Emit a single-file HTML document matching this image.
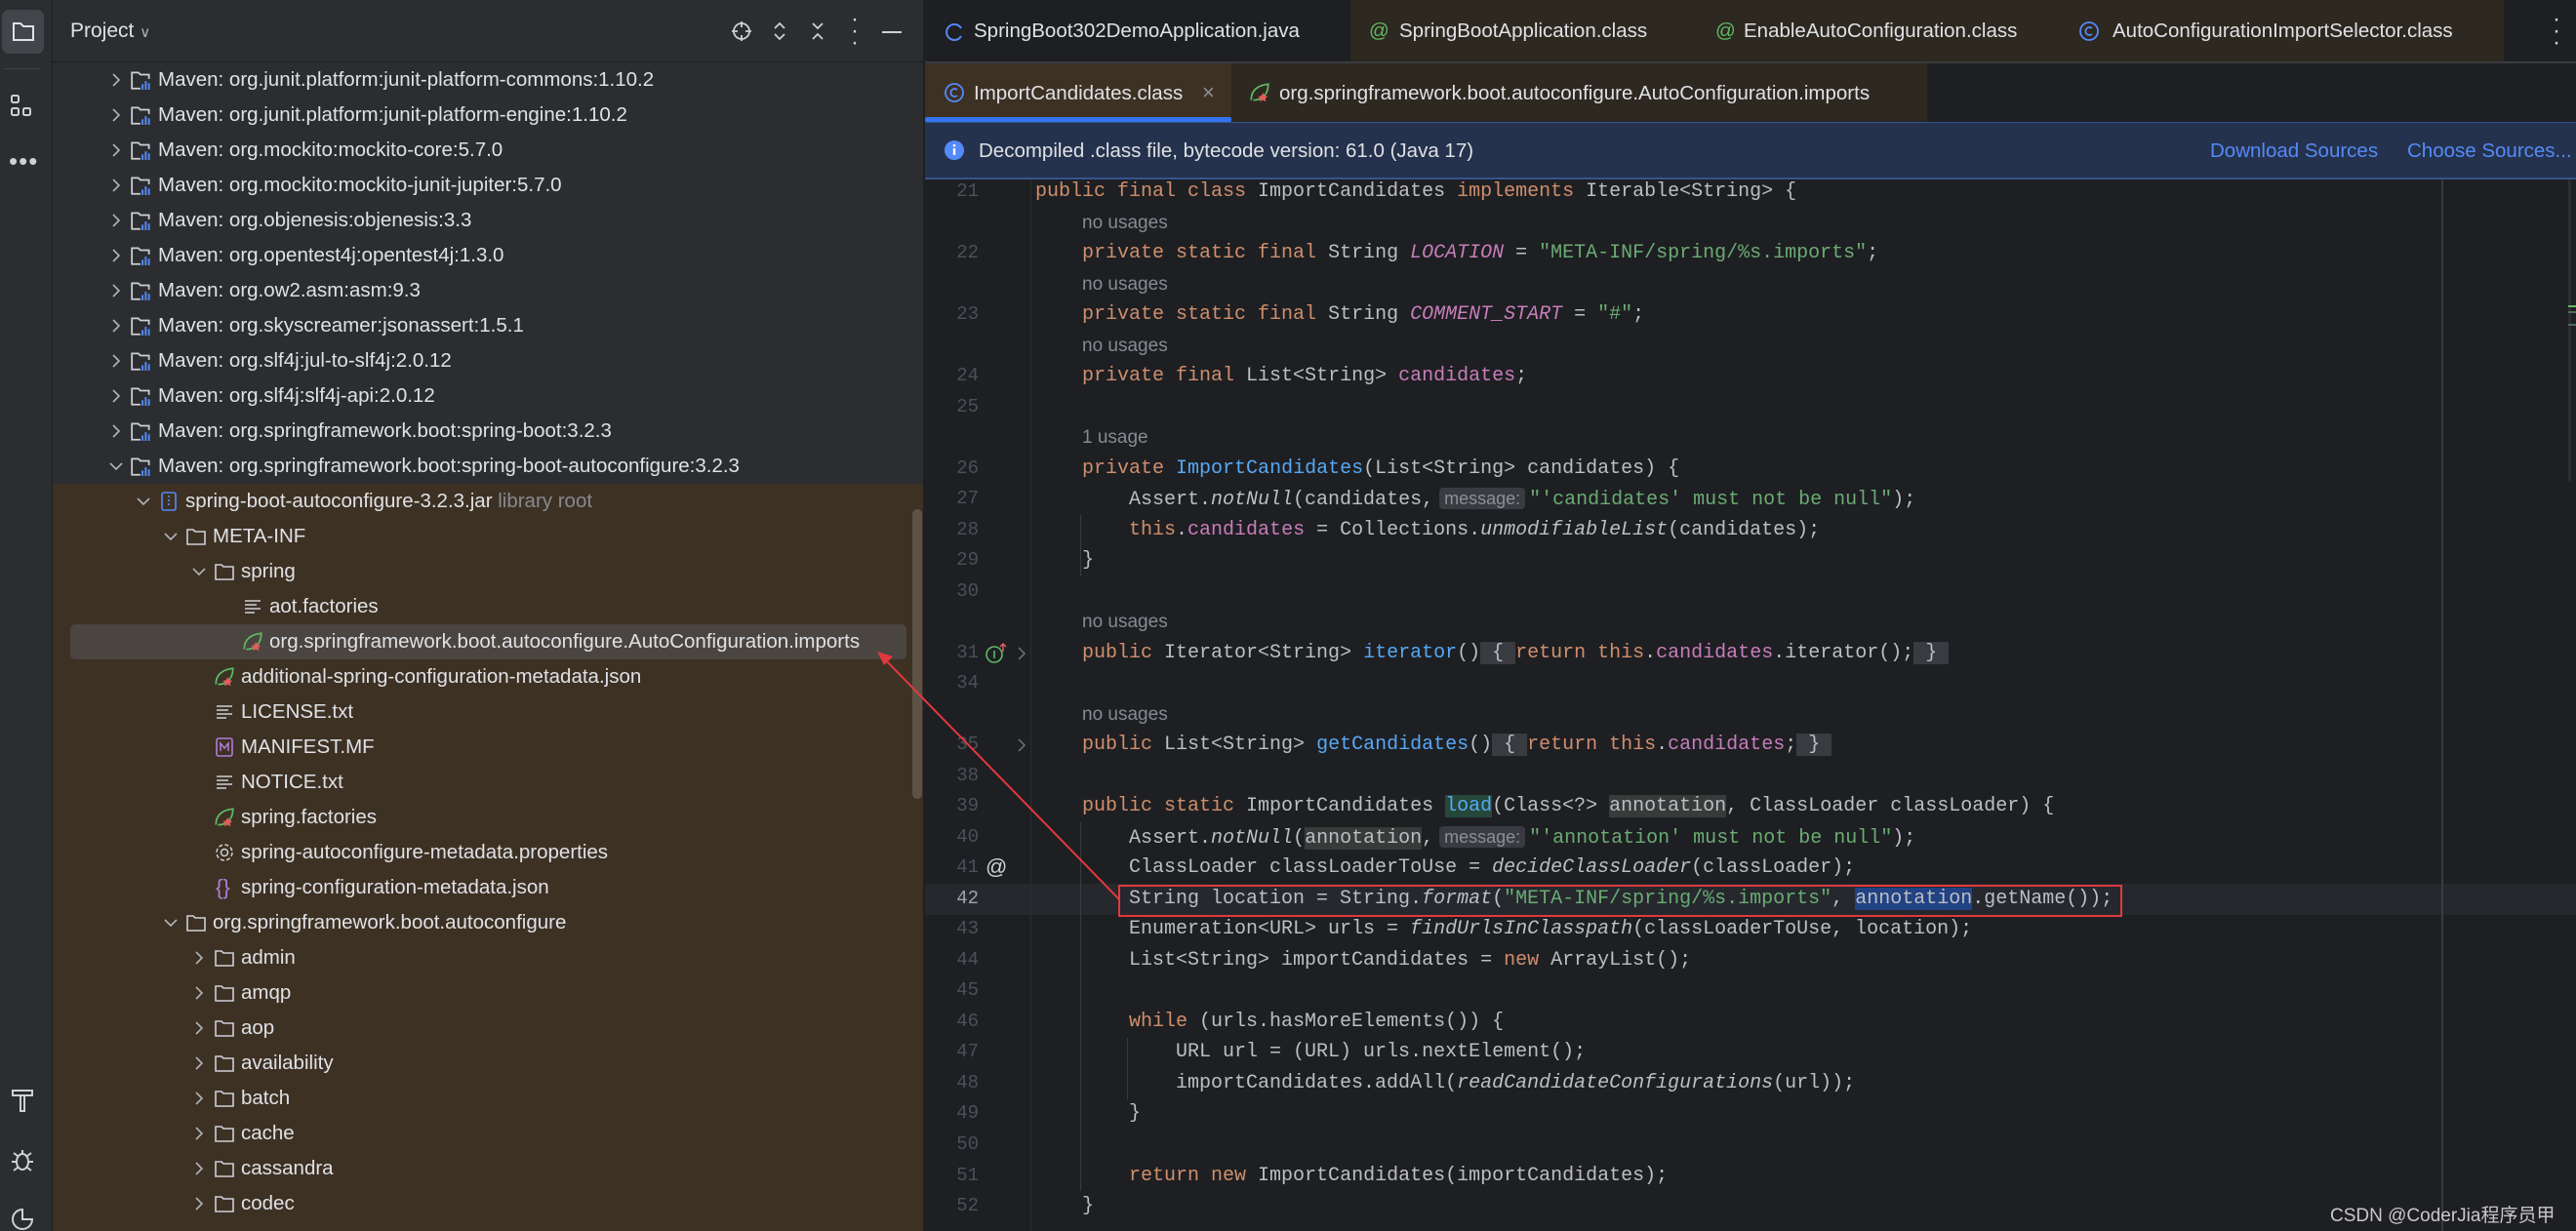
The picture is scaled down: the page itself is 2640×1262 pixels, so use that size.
<!DOCTYPE html>
<html><head><meta charset="utf-8">
<style>
*{margin:0;padding:0;box-sizing:border-box}
html,body{width:2640px;height:1262px}
body{background:#1e1f22;position:relative;overflow:hidden;font-family:"Liberation Sans",sans-serif;color:#dfe1e5}
.a{position:absolute}
.ui{font-size:20.5px;white-space:nowrap}
.tr{position:absolute;height:36px;line-height:36px;font-size:20.5px;white-space:nowrap;color:#dfe1e5}
.tr svg{position:absolute;top:9px}
.cd{position:absolute;left:1061px;top:181px;font-family:"Liberation Mono",monospace;font-size:20px;color:#bcbec4}
.cd div{height:31.53px;line-height:31.53px;white-space:pre}
.ln{position:absolute;left:960px;width:43px;top:181px;font-family:"Liberation Mono",monospace;font-size:19px;color:#4b5059;text-align:right}
.ln div{height:31.53px;line-height:31.53px}
.k{color:#cf8e6d}.s{color:#6aab73}.f{color:#c77dbb}.m{color:#56a8f5}.i{font-style:italic}
.nu{font-family:"Liberation Sans",sans-serif;font-size:19px;color:#868a91}
.hint{font-family:"Liberation Sans",sans-serif;font-size:18px;color:#8c8f94;background:#393b41;border-radius:4px;padding:1px 5px;margin:0 4px 0 6px}
.fb{background:#393b41}
.us{background:#373b39}
</style></head><body>

<div class="a" style="left:0;top:0;width:54px;height:1262px;background:#2b2d30;border-right:1px solid #1e1f22"></div>
<div class="a" style="left:2px;top:10px;width:43px;height:45px;background:#43454a;border-radius:7px"></div>
<svg class="a" style="left:11px;top:19px" width="26" height="26" viewBox="0 0 26 26"><path d="M3 5h7l3 3h10v14H3z" fill="none" stroke="#dfe1e5" stroke-width="2"/></svg>
<div class="a" style="left:5px;top:70px;width:36px;height:1px;background:#43454a"></div>
<svg class="a" style="left:10px;top:96px" width="26" height="26" viewBox="0 0 26 26" fill="none" stroke="#ced0d6" stroke-width="2"><rect x="2" y="2" width="7" height="7" rx="1.5"/><rect x="2" y="15" width="7" height="7" rx="1.5"/><rect x="14" y="15" width="7" height="7" rx="1.5"/></svg>
<div class="a" style="left:9px;top:150px;font-size:26px;color:#ced0d6;letter-spacing:1px">•••</div>
<svg class="a" style="left:9px;top:1114px" width="28" height="28" viewBox="0 0 28 28" fill="none" stroke="#ced0d6" stroke-width="2"><path d="M4 4h20v5H4zM12 9v16h4V9"/></svg>
<svg class="a" style="left:9px;top:1175px" width="28" height="28" viewBox="0 0 28 28" fill="none" stroke="#ced0d6" stroke-width="2"><ellipse cx="14" cy="16" rx="6" ry="8"/><path d="M8 16H3M20 16h5M9 10L5 7M19 10l4-3M9 22l-4 3M19 22l4 3M14 8V4"/></svg>
<svg class="a" style="left:9px;top:1236px" width="28" height="26" viewBox="0 0 28 26" fill="none" stroke="#ced0d6" stroke-width="2"><path d="M14 4a10 10 0 1 0 10 10H14z"/></svg>

<div class="a" style="left:54px;top:0;width:892px;height:1262px;background:#2b2d30"></div>
<div class="a" style="left:54px;top:63px;width:892px;height:1px;background:#1e1f22"></div>
<div class="a ui" style="left:72px;top:20px;font-size:21px;color:#dfe1e5">Project <span style="font-size:15px;color:#b0b3b8">∨</span></div>
<svg class="a" style="left:749px;top:21px" width="22" height="22" viewBox="0 0 22 22" fill="none" stroke="#ced0d6" stroke-width="1.8"><circle cx="11" cy="11" r="8"/><path d="M11 1v6M11 15v6M1 11h6M15 11h6"/></svg>
<svg class="a" style="left:790px;top:21px" width="18" height="22" viewBox="0 0 18 22" fill="none" stroke="#ced0d6" stroke-width="1.8"><path d="M4 8l5-5 5 5M4 14l5 5 5-5"/></svg>
<svg class="a" style="left:829px;top:21px" width="18" height="22" viewBox="0 0 18 22" fill="none" stroke="#ced0d6" stroke-width="1.8"><path d="M4 3l5 5 5-5M4 19l5-5 5 5"/></svg>
<div class="a" style="left:872px;top:14px;font-size:24px;color:#ced0d6;line-height:12px;width:8px">·<br>·<br>·</div>
<div class="a" style="left:904px;top:32px;width:20px;height:2px;background:#ced0d6"></div>

<div class="a" style="left:54px;top:496px;width:892px;height:766px;background:#3d3124"></div>
<div class="a" style="left:72px;top:640px;width:857px;height:36px;background:#4a4540;border-radius:5px"></div>
<div class="a" style="left:935px;top:522px;width:10px;height:297px;background:#5c5246;border-radius:5px"></div>

<svg width="0" height="0" style="position:absolute">
<defs>
<symbol id="chr" viewBox="0 0 18 18"><path d="M6 3l6 6-6 6" fill="none" stroke="#b0b3b8" stroke-width="1.6"/></symbol>
<symbol id="chd" viewBox="0 0 18 18"><path d="M3 6l6 6 6-6" fill="none" stroke="#b0b3b8" stroke-width="1.6"/></symbol>
<symbol id="mvn" viewBox="0 0 22 22"><path d="M2 4h6l2 2h8v13H2z" fill="none" stroke="#ced0d6" stroke-width="1.6"/><rect x="10" y="10" width="9" height="10" fill="#2b2d30"/><path d="M12 20v-5M15 20v-8M18 20v-6" stroke="#548af7" stroke-width="1.8"/></symbol>
<symbol id="fld" viewBox="0 0 22 22"><path d="M2 4h6l2 2h10v13H2z" fill="none" stroke="#ced0d6" stroke-width="1.6"/></symbol>
<symbol id="txt" viewBox="0 0 22 22"><path d="M3 5h16M3 9h12M3 13h16M3 17h10" stroke="#ced0d6" stroke-width="1.6"/></symbol>
<symbol id="spr" viewBox="0 0 22 22"><path d="M3 18C3 8 10 4 19 3c0 9-5 15-14 15" fill="none" stroke="#5fb865" stroke-width="1.6"/><path d="M14 11l1.5 3 3 .5-2.2 2 .6 3-2.9-1.5-2.9 1.5.6-3-2.2-2 3-.5z" fill="#e55b5b"/></symbol>
<symbol id="jar" viewBox="0 0 22 22"><rect x="4" y="2" width="14" height="18" rx="2" fill="none" stroke="#548af7" stroke-width="1.6"/><path d="M11 5v2M11 9v2M11 13v2" stroke="#548af7" stroke-width="1.6"/></symbol>
</defs></svg>

<div class="tr" style="top:64px;left:110px"><svg style="left:0" width="18" height="18"><use href="#chr"/></svg><svg style="left:23px;top:6px" width="24" height="24"><use href="#mvn"/></svg><span style="position:absolute;left:52px">Maven: org.junit.platform:junit-platform-commons:1.10.2</span></div>
<div class="tr" style="top:100px;left:110px"><svg style="left:0" width="18" height="18"><use href="#chr"/></svg><svg style="left:23px;top:6px" width="24" height="24"><use href="#mvn"/></svg><span style="position:absolute;left:52px">Maven: org.junit.platform:junit-platform-engine:1.10.2</span></div>
<div class="tr" style="top:136px;left:110px"><svg style="left:0" width="18" height="18"><use href="#chr"/></svg><svg style="left:23px;top:6px" width="24" height="24"><use href="#mvn"/></svg><span style="position:absolute;left:52px">Maven: org.mockito:mockito-core:5.7.0</span></div>
<div class="tr" style="top:172px;left:110px"><svg style="left:0" width="18" height="18"><use href="#chr"/></svg><svg style="left:23px;top:6px" width="24" height="24"><use href="#mvn"/></svg><span style="position:absolute;left:52px">Maven: org.mockito:mockito-junit-jupiter:5.7.0</span></div>
<div class="tr" style="top:208px;left:110px"><svg style="left:0" width="18" height="18"><use href="#chr"/></svg><svg style="left:23px;top:6px" width="24" height="24"><use href="#mvn"/></svg><span style="position:absolute;left:52px">Maven: org.objenesis:objenesis:3.3</span></div>
<div class="tr" style="top:244px;left:110px"><svg style="left:0" width="18" height="18"><use href="#chr"/></svg><svg style="left:23px;top:6px" width="24" height="24"><use href="#mvn"/></svg><span style="position:absolute;left:52px">Maven: org.opentest4j:opentest4j:1.3.0</span></div>
<div class="tr" style="top:280px;left:110px"><svg style="left:0" width="18" height="18"><use href="#chr"/></svg><svg style="left:23px;top:6px" width="24" height="24"><use href="#mvn"/></svg><span style="position:absolute;left:52px">Maven: org.ow2.asm:asm:9.3</span></div>
<div class="tr" style="top:316px;left:110px"><svg style="left:0" width="18" height="18"><use href="#chr"/></svg><svg style="left:23px;top:6px" width="24" height="24"><use href="#mvn"/></svg><span style="position:absolute;left:52px">Maven: org.skyscreamer:jsonassert:1.5.1</span></div>
<div class="tr" style="top:352px;left:110px"><svg style="left:0" width="18" height="18"><use href="#chr"/></svg><svg style="left:23px;top:6px" width="24" height="24"><use href="#mvn"/></svg><span style="position:absolute;left:52px">Maven: org.slf4j:jul-to-slf4j:2.0.12</span></div>
<div class="tr" style="top:388px;left:110px"><svg style="left:0" width="18" height="18"><use href="#chr"/></svg><svg style="left:23px;top:6px" width="24" height="24"><use href="#mvn"/></svg><span style="position:absolute;left:52px">Maven: org.slf4j:slf4j-api:2.0.12</span></div>
<div class="tr" style="top:424px;left:110px"><svg style="left:0" width="18" height="18"><use href="#chr"/></svg><svg style="left:23px;top:6px" width="24" height="24"><use href="#mvn"/></svg><span style="position:absolute;left:52px">Maven: org.springframework.boot:spring-boot:3.2.3</span></div>
<div class="tr" style="top:460px;left:110px"><svg style="left:0" width="18" height="18"><use href="#chd"/></svg><svg style="left:23px;top:6px" width="24" height="24"><use href="#mvn"/></svg><span style="position:absolute;left:52px">Maven: org.springframework.boot:spring-boot-autoconfigure:3.2.3</span></div>
<div class="tr" style="top:496px;left:138px"><svg style="left:0" width="18" height="18"><use href="#chd"/></svg><svg style="left:24px;top:7px" width="22" height="22"><use href="#jar"/></svg><span style="position:absolute;left:52px">spring-boot-autoconfigure-3.2.3.jar <span style="color:#868a91">library root</span></span></div>
<div class="tr" style="top:532px;left:166px"><svg style="left:0" width="18" height="18"><use href="#chd"/></svg><svg style="left:24px;top:7px" width="22" height="22"><use href="#fld"/></svg><span style="position:absolute;left:52px">META-INF</span></div>
<div class="tr" style="top:568px;left:195px"><svg style="left:0" width="18" height="18"><use href="#chd"/></svg><svg style="left:24px;top:7px" width="22" height="22"><use href="#fld"/></svg><span style="position:absolute;left:52px">spring</span></div>
<div class="tr" style="top:604px;left:224px"><svg style="left:24px;top:7px" width="22" height="22"><use href="#txt"/></svg><span style="position:absolute;left:52px">aot.factories</span></div>
<div class="tr" style="top:640px;left:224px"><svg style="left:23px;top:6px" width="24" height="24"><use href="#spr"/></svg><span style="position:absolute;left:52px">org.springframework.boot.autoconfigure.AutoConfiguration.imports</span></div>
<div class="tr" style="top:676px;left:195px"><svg style="left:23px;top:6px" width="24" height="24"><use href="#spr"/></svg><span style="position:absolute;left:52px">additional-spring-configuration-metadata.json</span></div>
<div class="tr" style="top:712px;left:195px"><svg style="left:24px;top:7px" width="22" height="22"><use href="#txt"/></svg><span style="position:absolute;left:52px">LICENSE.txt</span></div>
<div class="tr" style="top:748px;left:195px"><svg style="left:24px;top:7px" width="22" height="22" viewBox="0 0 22 22"><rect x="3" y="2" width="16" height="18" rx="2" fill="none" stroke="#b17cd8" stroke-width="1.6"/><path d="M7 15V7l4 5 4-5v8" fill="none" stroke="#b17cd8" stroke-width="1.5"/></svg><span style="position:absolute;left:52px">MANIFEST.MF</span></div>
<div class="tr" style="top:784px;left:195px"><svg style="left:24px;top:7px" width="22" height="22"><use href="#txt"/></svg><span style="position:absolute;left:52px">NOTICE.txt</span></div>
<div class="tr" style="top:820px;left:195px"><svg style="left:23px;top:6px" width="24" height="24"><use href="#spr"/></svg><span style="position:absolute;left:52px">spring.factories</span></div>
<div class="tr" style="top:856px;left:195px"><svg style="left:24px;top:7px" width="22" height="22" viewBox="0 0 22 22"><circle cx="11" cy="11" r="3.5" fill="none" stroke="#ced0d6" stroke-width="1.5"/><circle cx="11" cy="11" r="8" fill="none" stroke="#ced0d6" stroke-width="1.5" stroke-dasharray="4 2.3"/></svg><span style="position:absolute;left:52px">spring-autoconfigure-metadata.properties</span></div>
<div class="tr" style="top:892px;left:195px"><span style="position:absolute;left:26px;color:#b17cd8;font-size:22px">{}</span><span style="position:absolute;left:52px">spring-configuration-metadata.json</span></div>
<div class="tr" style="top:928px;left:166px"><svg style="left:0" width="18" height="18"><use href="#chd"/></svg><svg style="left:24px;top:7px" width="22" height="22"><use href="#fld"/></svg><span style="position:absolute;left:52px">org.springframework.boot.autoconfigure</span></div>
<div class="tr" style="top:964px;left:195px"><svg style="left:0" width="18" height="18"><use href="#chr"/></svg><svg style="left:24px;top:7px" width="22" height="22"><use href="#fld"/></svg><span style="position:absolute;left:52px">admin</span></div>
<div class="tr" style="top:1000px;left:195px"><svg style="left:0" width="18" height="18"><use href="#chr"/></svg><svg style="left:24px;top:7px" width="22" height="22"><use href="#fld"/></svg><span style="position:absolute;left:52px">amqp</span></div>
<div class="tr" style="top:1036px;left:195px"><svg style="left:0" width="18" height="18"><use href="#chr"/></svg><svg style="left:24px;top:7px" width="22" height="22"><use href="#fld"/></svg><span style="position:absolute;left:52px">aop</span></div>
<div class="tr" style="top:1072px;left:195px"><svg style="left:0" width="18" height="18"><use href="#chr"/></svg><svg style="left:24px;top:7px" width="22" height="22"><use href="#fld"/></svg><span style="position:absolute;left:52px">availability</span></div>
<div class="tr" style="top:1108px;left:195px"><svg style="left:0" width="18" height="18"><use href="#chr"/></svg><svg style="left:24px;top:7px" width="22" height="22"><use href="#fld"/></svg><span style="position:absolute;left:52px">batch</span></div>
<div class="tr" style="top:1144px;left:195px"><svg style="left:0" width="18" height="18"><use href="#chr"/></svg><svg style="left:24px;top:7px" width="22" height="22"><use href="#fld"/></svg><span style="position:absolute;left:52px">cache</span></div>
<div class="tr" style="top:1180px;left:195px"><svg style="left:0" width="18" height="18"><use href="#chr"/></svg><svg style="left:24px;top:7px" width="22" height="22"><use href="#fld"/></svg><span style="position:absolute;left:52px">cassandra</span></div>
<div class="tr" style="top:1216px;left:195px"><svg style="left:0" width="18" height="18"><use href="#chr"/></svg><svg style="left:24px;top:7px" width="22" height="22"><use href="#fld"/></svg><span style="position:absolute;left:52px">codec</span></div>

<div class="a" style="left:948px;top:0;width:1692px;height:63px;background:#1e1f22"></div>
<div class="a" style="left:1384px;top:0;width:1182px;height:63px;background:#2d2820"></div>
<div class="a" style="left:948px;top:63px;width:1692px;height:2px;background:#393b40"></div>
<svg class="a" style="left:967px;top:21px" width="24" height="24" viewBox="0 0 24 24" fill="none" stroke="#548af7" stroke-width="2"><path d="M18 8a8 8 0 1 0 0 8"/></svg>
<div class="a ui" style="left:998px;top:20px">SpringBoot302DemoApplication.java</div>
<div class="a ui" style="left:1403px;top:20px;color:#5fb865">@</div><div class="a ui" style="left:1434px;top:20px">SpringBootApplication.class</div>
<div class="a ui" style="left:1758px;top:20px;color:#5fb865">@</div><div class="a ui" style="left:1787px;top:20px">EnableAutoConfiguration.class</div>
<svg class="a" style="left:2130px;top:21px" width="22" height="22" viewBox="0 0 22 22" fill="none" stroke="#548af7" stroke-width="1.8"><circle cx="11" cy="11" r="9"/><path d="M14 8a4 4 0 1 0 0 6"/></svg>
<div class="a ui" style="left:2165px;top:20px">AutoConfigurationImportSelector.class</div>
<div class="a" style="left:2616px;top:14px;font-size:24px;color:#ced0d6;line-height:12px">·<br>·<br>·</div>

<div class="a" style="left:948px;top:65px;width:314px;height:60px;background:#3d3124"></div>
<div class="a" style="left:1262px;top:65px;width:713px;height:60px;background:#2d2820"></div>
<div class="a" style="left:948px;top:120px;width:314px;height:5px;background:#3574f0;border-radius:2px"></div>
<svg class="a" style="left:967px;top:84px" width="22" height="22" viewBox="0 0 22 22" fill="none" stroke="#548af7" stroke-width="1.8"><circle cx="11" cy="11" r="9"/><path d="M14 8a4 4 0 1 0 0 6"/></svg>
<div class="a ui" style="left:998px;top:84px">ImportCandidates.class</div>
<div class="a ui" style="left:1232px;top:82px;color:#8c8f94;font-size:22px">×</div>
<svg class="a" style="left:1279px;top:83px" width="24" height="24"><use href="#spr"/></svg>
<div class="a ui" style="left:1311px;top:84px">org.springframework.boot.autoconfigure.AutoConfiguration.imports</div>

<div class="a" style="left:948px;top:125px;width:1692px;height:59px;background:#25324d;border-top:1px solid #35538f;border-bottom:2px solid #35538f"></div>
<svg class="a" style="left:967px;top:143px" width="22" height="22" viewBox="0 0 22 22"><circle cx="11" cy="11" r="10" fill="#548af7"/><rect x="9.8" y="9" width="2.4" height="7" fill="#fff"/><rect x="9.8" y="5" width="2.4" height="2.4" fill="#fff"/></svg>
<div class="a ui" style="left:1003px;top:143px">Decompiled .class file, bytecode version: 61.0 (Java 17)</div>
<div class="a ui" style="left:2265px;top:143px;color:#548af7">Download Sources</div>
<div class="a ui" style="left:2467px;top:143px;color:#548af7">Choose Sources...</div>

<div class="a" style="left:948px;top:906px;width:1692px;height:32px;background:#26282e"></div>
<div class="a" style="left:1056px;top:184px;width:1px;height:1078px;background:#2b2d30"></div>
<div class="a" style="left:2502px;top:184px;width:2px;height:1078px;background:#393b40"></div>
<div class="a" style="left:1107px;top:528px;width:1px;height:63px;background:#393b40"></div>
<div class="a" style="left:1107px;top:843px;width:1px;height:378px;background:#393b40"></div>
<div class="a" style="left:1155px;top:1064px;width:1px;height:63px;background:#393b40"></div>
<div class="a" style="left:2632px;top:184px;width:3px;height:310px;background:#2b2d30"></div>
<div class="a" style="left:2632px;top:313px;width:8px;height:2px;background:#5fb865"></div>
<div class="a" style="left:2632px;top:319px;width:8px;height:2px;background:#4e6b5a"></div>
<div class="a" style="left:2632px;top:332px;width:8px;height:2px;background:#4e6b5a"></div>

<div class="ln"><div>21</div><div></div><div>22</div><div></div><div>23</div><div></div><div>24</div><div>25</div><div></div><div>26</div><div>27</div><div>28</div><div>29</div><div>30</div><div></div><div>31</div><div>34</div><div></div><div>35</div><div>38</div><div>39</div><div>40</div><div>41</div><div style="color:#a1a3ab">42</div><div>43</div><div>44</div><div>45</div><div>46</div><div>47</div><div>48</div><div>49</div><div>50</div><div>51</div><div>52</div></div>
<svg class="a" style="left:1009px;top:658px" width="26" height="24" viewBox="0 0 26 24"><circle cx="10" cy="13" r="8" fill="none" stroke="#5fb865" stroke-width="1.6"/><path d="M10 9v8" stroke="#5fb865" stroke-width="1.6"/><path d="M19 10V2M16 5l3-3 3 3" fill="none" stroke="#e55b5b" stroke-width="1.5"/></svg>
<svg class="a" style="left:1040px;top:661px" width="14" height="18"><path d="M4 3l6 6-6 6" fill="none" stroke="#6f737a" stroke-width="1.5"/></svg>
<svg class="a" style="left:1040px;top:755px" width="14" height="18"><path d="M4 3l6 6-6 6" fill="none" stroke="#6f737a" stroke-width="1.5"/></svg>
<div class="a" style="left:1010px;top:876px;font-size:22px;color:#ced0d6">@</div>

<div class="cd"><div><span class="k">public final class</span> ImportCandidates <span class="k">implements</span> Iterable&lt;String&gt; {</div><div>    <span class="nu">no usages</span></div><div>    <span class="k">private static final</span> String <span class="f i">LOCATION</span> = <span class="s">"META-INF/spring/%s.imports"</span>;</div><div>    <span class="nu">no usages</span></div><div>    <span class="k">private static final</span> String <span class="f i">COMMENT_START</span> = <span class="s">"#"</span>;</div><div>    <span class="nu">no usages</span></div><div>    <span class="k">private final</span> List&lt;String&gt; <span class="f">candidates</span>;</div><div> </div><div>    <span class="nu">1 usage</span></div><div>    <span class="k">private</span> <span class="m">ImportCandidates</span>(List&lt;String&gt; candidates) {</div><div>        Assert.<span class="i">notNull</span>(candidates,<span class="hint">message:</span><span class="s">"'candidates' must not be null"</span>);</div><div>        <span class="k">this</span>.<span class="f">candidates</span> = Collections.<span class="i">unmodifiableList</span>(candidates);</div><div>    }</div><div> </div><div>    <span class="nu">no usages</span></div><div>    <span class="k">public</span> Iterator&lt;String&gt; <span class="m">iterator</span>()<span class="fb"> { </span><span class="k">return this</span>.<span class="f">candidates</span>.iterator();<span class="fb"> } </span></div><div> </div><div>    <span class="nu">no usages</span></div><div>    <span class="k">public</span> List&lt;String&gt; <span class="m">getCandidates</span>()<span class="fb"> { </span><span class="k">return this</span>.<span class="f">candidates</span>;<span class="fb"> } </span></div><div> </div><div>    <span class="k">public static</span> ImportCandidates <span class="m" style="background:#25483a">load</span>(Class&lt;?&gt; <span class="us">annotation</span>, ClassLoader classLoader) {</div><div>        Assert.<span class="i">notNull</span>(<span class="us">annotation</span>,<span class="hint">message:</span><span class="s">"'annotation' must not be null"</span>);</div><div>        ClassLoader classLoaderToUse = <span class="i">decideClassLoader</span>(classLoader);</div><div>        String location = String.<span class="i">format</span>(<span class="s">"META-INF/spring/%s.imports"</span>, <span style="background:#214283">annotation</span>.getName());</div><div>        Enumeration&lt;URL&gt; urls = <span class="i">findUrlsInClasspath</span>(classLoaderToUse, location);</div><div>        List&lt;String&gt; importCandidates = <span class="k">new</span> ArrayList();</div><div> </div><div>        <span class="k">while</span> (urls.hasMoreElements()) {</div><div>            URL url = (URL) urls.nextElement();</div><div>            importCandidates.addAll(<span class="i">readCandidateConfigurations</span>(url));</div><div>        }</div><div> </div><div>        <span class="k">return new</span> ImportCandidates(importCandidates);</div><div>    }</div></div>

<div class="a" style="left:1146px;top:907px;width:1029px;height:33px;border:2px solid #e0393e"></div>
<svg class="a" style="left:0;top:0" width="2640" height="1262" viewBox="0 0 2640 1262"><line x1="903" y1="672" x2="1147" y2="922" stroke="#e0393e" stroke-width="2"/><path d="M899 668l16 5-9 9z" fill="#e0393e"/></svg>

<div class="a" style="left:2388px;top:1231px;white-space:nowrap;font-family:'Liberation Sans','Noto Sans CJK SC',sans-serif;font-size:19px;color:#c8c8c8">CSDN @CoderJia程序员甲</div>
</body></html>
